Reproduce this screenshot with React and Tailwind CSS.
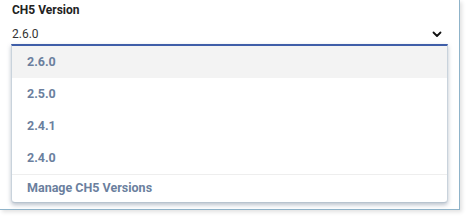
import React from 'react';

const VERSIONS = ['2.6.0', '2.5.0', '2.4.1', '2.4.0'];

function App() {
  return (
    <div className="w-[474px] h-[223px] bg-white" style={{ fontFamily: 'Roboto, "Liberation Sans", sans-serif' }}>
      <div className="w-[460px] h-[210px] border-r border-b border-[#8fb3c9] shadow-[2px_2px_4px_rgba(0,0,0,0.12)] pt-[3px]">
        <div className="pl-[12px] text-[12px] font-bold text-[#222] leading-[14px]">CH5 Version</div>

        <div className="flex items-center justify-between pl-[12px] pr-[17px] mt-[10px] h-[14px]">
          <span className="text-[12px] text-[#333] leading-[14px]">2.6.0</span>
          <svg width="10" height="7" viewBox="0 0 10 7" fill="none">
            <path d="M1.5 1.5 L5 5 L8.5 1.5" stroke="#111" strokeWidth="1.8" strokeLinecap="round" strokeLinejoin="round" />
          </svg>
        </div>

        {/* dropdown menu */}
        <div className="ml-[11px] mt-[3px] w-[437px] border-t-2 border-[#3f5ea8] border-x border-b border-x-[#c9d3dc] border-b-[#b8c4cf] rounded-b-[4px] bg-white shadow-[0_2px_4px_rgba(60,80,110,0.35)]">
          {VERSIONS.map((v, i) => (
            <div
              key={v}
              className={`h-[32px] flex items-center pl-[15px] text-[12.5px] font-bold text-[#6b7f9e] ${i === 0 ? 'bg-[#f3f3f3]' : ''}`}
            >
              {v}
            </div>
          ))}
          <div className="h-[28px] flex items-center pl-[15px] text-[12.5px] font-bold text-[#6b7f9e] border-t border-[#eeeeee]">
            Manage CH5 Versions
          </div>
        </div>
      </div>
    </div>
  );
}

export default App;
